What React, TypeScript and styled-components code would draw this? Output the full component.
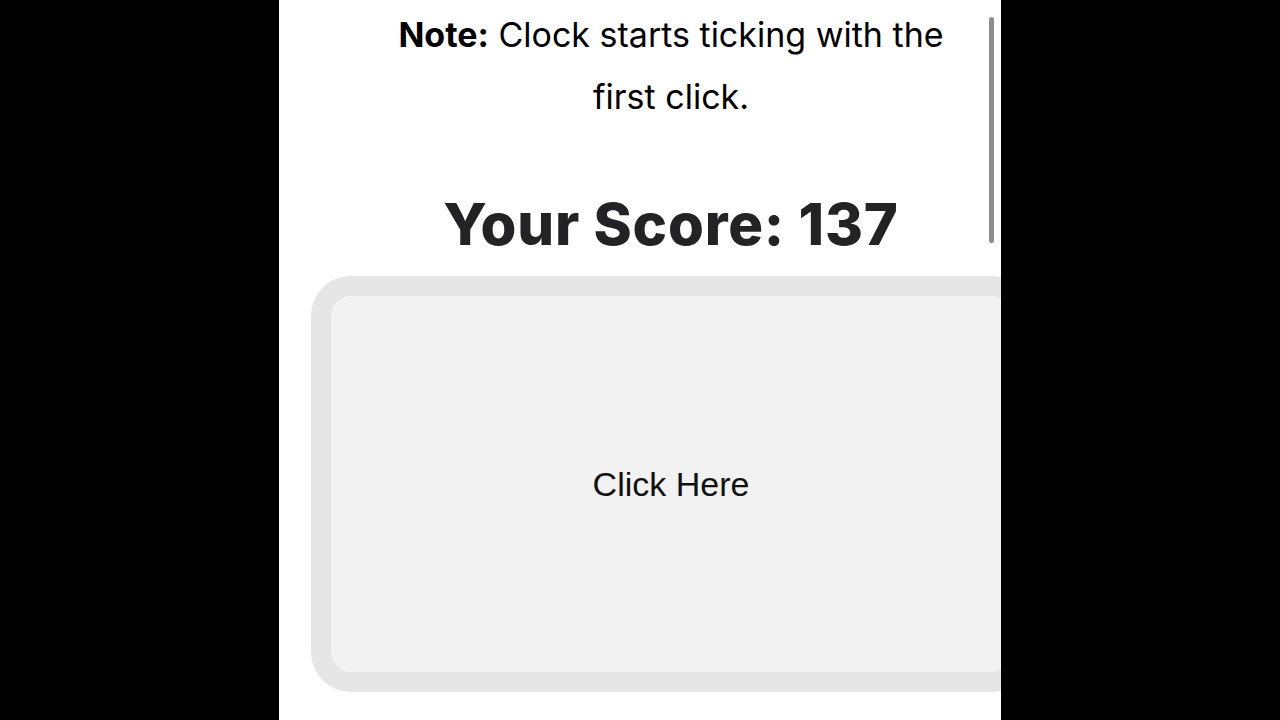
import { createGlobalStyle } from "styled-components";
import styled from "styled-components";

const GlobalStyle = createGlobalStyle`
  html, body {
    margin: 0;
    padding: 0;
    background: #000;
  }
`;

export default function App() {
  return (
    <>
      <GlobalStyle />
      <StyledPage>
        <StyledScreen>
          <StyledContent>
            <StyledNote>
              <b>Note:</b> Clock starts ticking with the first click.
            </StyledNote>
            <StyledScore>Your Score: 137</StyledScore>
            <StyledClickBox>Click Here</StyledClickBox>
          </StyledContent>
          <StyledScrollbar />
        </StyledScreen>
      </StyledPage>
    </>
  );
}

const StyledPage = styled.div`
  display: flex;
  justify-content: center;
  width: 1280px;
  height: 720px;
  background: #000;
`;

const StyledScreen = styled.div`
  position: relative;
  width: 722px;
  height: 720px;
  background: #fff;
  overflow: hidden;
`;

const StyledContent = styled.div`
  width: 720px;
  margin-left: 32px;
  display: flex;
  flex-direction: column;
  align-items: center;
`;

const StyledNote = styled.p`
  width: 600px;
  margin: 4px 0 0;
  text-align: center;
  font-family: Inter, "Liberation Sans", sans-serif;
  font-size: 34px;
  line-height: 62px;
  color: #000;

  b {
    font-weight: 700;
  }
`;

const StyledScore = styled.h1`
  margin: 61px 0 0;
  font-family: Inter, "Open Sans", sans-serif;
  font-weight: 800;
  font-size: 58px;
  letter-spacing: 0.8px;
  line-height: 70px;
  color: #232326;
`;

const StyledClickBox = styled.button`
  margin-top: 17px;
  width: 720px;
  height: 416px;
  box-sizing: border-box;
  border: 20px solid #e6e6e6;
  border-radius: 40px;
  background: #f2f2f2;
  font-family: "Liberation Sans", Arial, sans-serif;
  font-size: 34px;
  color: #111;
  cursor: pointer;
`;

const StyledScrollbar = styled.div`
  position: absolute;
  top: 17px;
  right: 7px;
  width: 5px;
  height: 226px;
  border-radius: 3px;
  background: #8e8e8e;
`;
